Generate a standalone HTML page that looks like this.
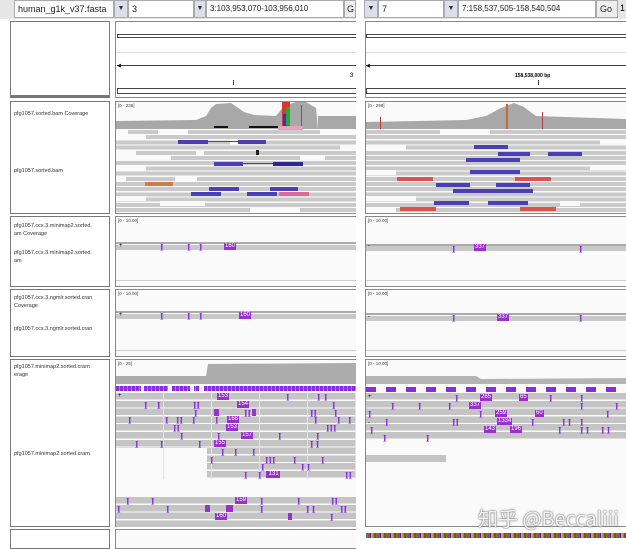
<!DOCTYPE html><html><head><meta charset="utf-8"><style>
*{margin:0;padding:0;box-sizing:border-box}
body{width:626px;height:547px;overflow:hidden;background:#fff;font-family:"Liberation Sans",sans-serif;position:relative}
.a{position:absolute}
.tb{position:absolute;top:0;height:18px;background:#fff;border:1px solid #aaa;font-size:9px;line-height:16px;padding-left:3px;color:#222}
.ar{position:absolute;top:0;height:18px;background:#dde;border:1px solid #aaa;font-size:7px;line-height:16px;text-align:center;color:#333}
.nm{position:absolute;left:10px;width:100px;background:#fff;border:1px solid #777;font-size:5.5px;color:#333}
.dp{position:absolute;background:#fafafa;border:1px solid #888}
.sc{position:absolute;font-size:4.5px;color:#444}
.I{position:absolute;color:#8a2be2;font:bold 9px "Liberation Serif",serif;line-height:8px;transform:scaleY(1.1)}
.bx{position:absolute;background:#9b30d0;color:#fff;font-size:6px;line-height:7px;height:7px;padding:0 1px}
.b{position:absolute;height:4px;background:#4a3fb5}
.rd{position:absolute;height:4px;background:#d9534f}
.g{position:absolute;background:#fafafa}
</style></head><body>
<div class="a" style="left:0;top:0;width:626px;height:19px;background:#e6e6e6"></div>
<div class="tb" style="left:14px;width:100px">human_g1k_v37.fasta</div>
<div class="ar" style="left:114px;width:14px">▼</div>
<div class="tb" style="left:128px;width:66px">3</div>
<div class="ar" style="left:194px;width:12px">▼</div>
<div class="tb" style="left:206px;width:138px;font-size:8px">3:103,953,070-103,956,010</div>
<div class="tb" style="left:344px;width:12px;padding-left:2px;background:#eee">G</div>
<div class="ar" style="left:364px;width:14px">▼</div>
<div class="tb" style="left:378px;width:66px">7</div>
<div class="ar" style="left:444px;width:14px">▼</div>
<div class="tb" style="left:458px;width:138px;font-size:8px">7:158,537,505-158,540,504</div>
<div class="tb" style="left:596px;width:22px;background:#eee">Go</div>
<div class="a" style="left:620px;top:3px;font-size:9px">1</div>
<div class="a" style="left:356px;top:0;width:8px;height:547px;background:#fff"></div>

<!-- ruler -->
<div class="nm" style="top:21px;height:77px"></div>
<div class="a" style="left:10px;top:95px;width:100px;height:2px;background:#777"></div>
<div class="dp" style="left:115px;top:21px;width:241px;height:77px;background:#fff;border-right:none"></div>
<div class="dp" style="left:365px;top:21px;width:261px;height:77px;background:#fff;border-right:none"></div>
<div class="a" style="left:117px;top:34px;width:239px;height:4px;border:1px solid #444;border-right:none"></div>
<div class="a" style="left:366px;top:34px;width:260px;height:4px;border:1px solid #444;border-right:none"></div>
<div class="a" style="left:117px;top:52px;width:239px;height:1px;background:#ddd"></div>
<div class="a" style="left:366px;top:52px;width:260px;height:1px;background:#ddd"></div>
<div class="a" style="left:117px;top:65px;width:239px;height:1px;background:#444"></div>
<div class="a" style="left:366px;top:65px;width:260px;height:1px;background:#444"></div>
<div class="a" style="left:117px;top:63px;font-size:5px">◀</div>
<div class="a" style="left:366px;top:63px;font-size:5px">◀</div>
<div class="a" style="left:233px;top:80px;width:1px;height:5px;background:#444"></div>
<div class="a" style="left:538px;top:80px;width:1px;height:5px;background:#444"></div>
<div class="a" style="left:350px;top:73px;font-size:6px">3</div>
<div class="a" style="left:515px;top:73px;font-size:5px;font-weight:bold">158,538,000 bp</div>
<div class="a" style="left:117px;top:88px;width:239px;height:6px;border:1px solid #444;border-right:none"></div>
<div class="a" style="left:366px;top:88px;width:260px;height:6px;border:1px solid #444;border-right:none"></div>

<!-- section 1 -->
<div class="nm" style="top:101px;height:113px"><div class="a" style="left:3px;top:9px">pfg1057.sorted.bam Coverage</div><div class="a" style="left:3px;top:66px">pfg1057.sorted.bam</div></div>
<div class="dp" style="left:115px;top:101px;width:241px;height:113px;border-right:none"></div>
<div class="dp" style="left:365px;top:101px;width:261px;height:113px;border-right:none"></div>
<svg class="a" style="left:116px;top:102px" width="240" height="27"><polygon points="0,27 0,19 80,18 90,14 95,6 100,2 115,1 128,10 138,13 160,14 168,4 180,0 190,0 200,6 202,27" fill="#a8a8a8"/><polygon points="202,27 202,14 240,14 240,27" fill="#a8a8a8"/><rect x="166" y="0" width="8" height="27" fill="#d33"/><rect x="170" y="5" width="4" height="18" fill="#2a3"/><rect x="167" y="12" width="3" height="12" fill="#33c"/><rect x="185" y="3" width="1" height="24" fill="#a44"/><rect x="98" y="24" width="14" height="2" fill="#111"/><rect x="133" y="24" width="35" height="2" fill="#111"/></svg>
<svg class="a" style="left:366px;top:102px" width="260" height="27"><polygon points="0,27 0,20 100,18 120,14 135,6 148,1 158,5 170,14 260,17 260,27" fill="#a8a8a8"/><rect x="140" y="2" width="2" height="25" fill="#c63"/><rect x="176" y="10" width="1" height="17" fill="#a44"/><rect x="14" y="15" width="1" height="12" fill="#c33"/></svg>
<div class="sc" style="left:118px;top:103px">[0 - 236]</div><div class="sc" style="left:368px;top:103px">[0 - 298]</div>
<div class="a" style="left:116px;top:130px;width:240px;height:83px;background:repeating-linear-gradient(180deg,#cacaca 0 4px,transparent 4px 5.2px)"></div>
<div class="a" style="left:366px;top:130px;width:260px;height:83px;background:repeating-linear-gradient(180deg,#cacaca 0 4px,transparent 4px 5.2px)"></div>
<div class="g" style="left:116px;top:130px;width:12px;height:5px"></div><div class="g" style="left:158px;top:130px;width:30px;height:5px"></div><div class="g" style="left:116px;top:135px;width:30px;height:5px"></div><div class="g" style="left:230px;top:140px;width:10px;height:5px"></div><div class="g" style="left:116px;top:150px;width:20px;height:5px"></div><div class="g" style="left:196px;top:150px;width:8px;height:5px"></div><div class="g" style="left:116px;top:156px;width:55px;height:5px"></div><div class="g" style="left:300px;top:156px;width:25px;height:5px"></div><div class="g" style="left:116px;top:166px;width:30px;height:5px"></div><div class="g" style="left:116px;top:176px;width:10px;height:5px"></div><div class="g" style="left:175px;top:176px;width:22px;height:5px"></div><div class="g" style="left:116px;top:196px;width:30px;height:5px"></div><div class="g" style="left:160px;top:201px;width:45px;height:5px"></div><div class="g" style="left:250px;top:207px;width:50px;height:5px"></div><div class="g" style="left:320px;top:130px;width:36px;height:5px"></div><div class="g" style="left:340px;top:145px;width:16px;height:5px"></div>
<div class="g" style="left:440px;top:130px;width:50px;height:5px"></div><div class="g" style="left:366px;top:145px;width:40px;height:5px"></div><div class="g" style="left:600px;top:140px;width:26px;height:5px"></div><div class="g" style="left:366px;top:170px;width:30px;height:5px"></div><div class="g" style="left:590px;top:165px;width:36px;height:5px"></div><div class="g" style="left:366px;top:196px;width:50px;height:5px"></div><div class="g" style="left:560px;top:201px;width:20px;height:5px"></div><div class="g" style="left:366px;top:207px;width:30px;height:5px"></div>
<div class="b" style="left:178px;top:140px;width:30px"></div><div class="a" style="left:208px;top:141px;width:30px;height:1px;background:#4a3fb5"></div><div class="b" style="left:238px;top:140px;width:28px"></div>
<div class="b" style="left:214px;top:162px;width:29px"></div><div class="a" style="left:243px;top:163px;width:30px;height:1px;background:#4a3fb5"></div><div class="b" style="left:273px;top:162px;width:30px;background:#2e2690"></div>
<div class="b" style="left:209px;top:187px;width:30px"></div><div class="b" style="left:270px;top:187px;width:28px"></div>
<div class="b" style="left:191px;top:192px;width:30px"></div><div class="b" style="left:247px;top:192px;width:30px"></div>
<div class="a" style="left:279px;top:192px;width:30px;height:4px;background:#d86a9a"></div>
<div class="a" style="left:145px;top:182px;width:28px;height:4px;background:#d07a4a"></div>
<div class="a" style="left:278px;top:126px;width:25px;height:4px;background:#e8a0c0"></div>
<div class="a" style="left:256px;top:150px;width:3px;height:5px;background:#222"></div>
<div class="b" style="left:474px;top:145px;width:34px"></div><div class="b" style="left:498px;top:152px;width:32px"></div><div class="b" style="left:548px;top:152px;width:34px"></div>
<div class="b" style="left:466px;top:158px;width:54px"></div><div class="b" style="left:470px;top:170px;width:50px"></div>
<div class="rd" style="left:397px;top:177px;width:36px"></div><div class="rd" style="left:515px;top:177px;width:36px"></div>
<div class="b" style="left:436px;top:183px;width:34px"></div><div class="b" style="left:496px;top:183px;width:34px"></div>
<div class="b" style="left:453px;top:189px;width:80px"></div><div class="b" style="left:434px;top:201px;width:35px"></div><div class="b" style="left:488px;top:201px;width:40px"></div>
<div class="rd" style="left:400px;top:207px;width:36px"></div><div class="rd" style="left:520px;top:207px;width:36px"></div>

<!-- section 2 -->
<div class="nm" style="top:216px;height:71px"><div class="a" style="left:3px;top:5px;line-height:8px">pfg1057.ccs.3.minimap2.sorted.<br>am Coverage</div><div class="a" style="left:3px;top:32px;line-height:8px">pfg1057.ccs.3.minimap2.sorted.<br>am</div></div>
<div class="dp" style="left:115px;top:216px;width:241px;height:71px;border-right:none"></div>
<div class="dp" style="left:365px;top:216px;width:261px;height:71px;border-right:none"></div>
<div class="sc" style="left:118px;top:218px">[0 - 10.00]</div><div class="sc" style="left:368px;top:218px">[0 - 10.00]</div>
<div class="a" style="left:116px;top:242px;width:240px;height:2px;background:#aaa"></div><div class="a" style="left:366px;top:244px;width:260px;height:2px;background:#aaa"></div>
<div class="a" style="left:116px;top:245px;width:240px;height:5px;background:#c8c8c8"></div><div class="a" style="left:366px;top:246px;width:260px;height:5px;background:#c8c8c8"></div>
<div class="a" style="left:119px;top:243px;font-size:6px">+</div><div class="a" style="left:368px;top:243px;font-size:6px">-</div>
<div class="I" style="left:160px;top:243px">I</div><div class="I" style="left:187px;top:243px">I</div><div class="I" style="left:199px;top:243px">I</div><div class="bx" style="left:224px;top:243px">160</div>
<div class="I" style="left:452px;top:245px">I</div><div class="bx" style="left:474px;top:244px">337</div><div class="I" style="left:579px;top:245px">I</div>
<div class="a" style="left:116px;top:280px;width:240px;height:1px;background:#ccc"></div><div class="a" style="left:366px;top:280px;width:260px;height:1px;background:#ccc"></div>

<!-- section 3 -->
<div class="nm" style="top:289px;height:68px"><div class="a" style="left:3px;top:4px;line-height:8px">pfg1057.ccs.3.ngmlr.sorted.cran<br>Coverage</div><div class="a" style="left:3px;top:36px">pfg1057.ccs.3.ngmlr.sorted.cran</div></div>
<div class="dp" style="left:115px;top:289px;width:241px;height:68px;border-right:none"></div>
<div class="dp" style="left:365px;top:289px;width:261px;height:68px;border-right:none"></div>
<div class="sc" style="left:118px;top:291px">[0 - 10.00]</div><div class="sc" style="left:368px;top:291px">[0 - 10.00]</div>
<div class="a" style="left:116px;top:311px;width:240px;height:2px;background:#aaa"></div><div class="a" style="left:366px;top:313px;width:260px;height:2px;background:#aaa"></div>
<div class="a" style="left:116px;top:314px;width:240px;height:5px;background:#c8c8c8"></div><div class="a" style="left:366px;top:316px;width:260px;height:5px;background:#c8c8c8"></div>
<div class="a" style="left:119px;top:312px;font-size:6px">+</div><div class="a" style="left:368px;top:314px;font-size:6px">-</div>
<div class="I" style="left:160px;top:312px">I</div><div class="I" style="left:187px;top:312px">I</div><div class="I" style="left:199px;top:312px">I</div><div class="bx" style="left:239px;top:312px">160</div>
<div class="I" style="left:452px;top:314px">I</div><div class="bx" style="left:497px;top:314px">337</div><div class="I" style="left:579px;top:314px">I</div>
<div class="a" style="left:116px;top:350px;width:240px;height:1px;background:#ccc"></div><div class="a" style="left:366px;top:350px;width:260px;height:1px;background:#ccc"></div>

<!-- section 4 -->
<div class="nm" style="top:359px;height:168px"><div class="a" style="left:3px;top:3px;line-height:8px">pfg1057.minimap2.sorted.cram<br>erage</div><div class="a" style="left:3px;top:91px">pfg1057.minimap2.sorted.cram</div></div>
<div class="dp" style="left:115px;top:359px;width:241px;height:168px;border-right:none"></div>
<div class="dp" style="left:365px;top:359px;width:261px;height:168px;border-right:none"></div>
<div class="sc" style="left:118px;top:361px">[0 - 25]</div><div class="sc" style="left:368px;top:361px">[0 - 10.00]</div>
<svg class="a" style="left:116px;top:362px" width="240" height="22"><polygon points="0,22 0,14 90,14 92,2 240,1 240,22" fill="#acacac"/></svg>
<svg class="a" style="left:366px;top:372px" width="260" height="12"><polygon points="0,12 0,4 110,4 115,7 260,6 260,12" fill="#b4b4b4"/></svg>
<div class="a" style="left:116px;top:386px;width:240px;height:5px;background:repeating-linear-gradient(90deg,#8a2be2 0 3px,#b37ae8 3px 4px)"></div>
<div class="g" style="left:141px;top:386px;width:3px;height:5px"></div><div class="g" style="left:168px;top:386px;width:4px;height:5px"></div><div class="g" style="left:190px;top:386px;width:4px;height:5px"></div><div class="g" style="left:199px;top:386px;width:5px;height:5px"></div>
<div class="a" style="left:366px;top:387px;width:260px;height:5px;background:repeating-linear-gradient(90deg,#8a2be2 0 10px,transparent 10px 20px)"></div>
<div class="a" style="left:116px;top:393px;width:240px;height:86px;background:repeating-linear-gradient(180deg,#c4c4c4 0 6.5px,transparent 6.5px 7.8px)"></div>
<div class="g" style="left:116px;top:448px;width:91px;height:32px"></div>
<div class="a" style="left:116px;top:393px;width:240px;height:86px;background:repeating-linear-gradient(90deg,transparent 0 47px,#e2e2e2 47px 48px)"></div>
<div class="a" style="left:366px;top:393px;width:260px;height:46px;background:repeating-linear-gradient(180deg,#c4c4c4 0 6.5px,transparent 6.5px 7.8px)"></div>
<div class="a" style="left:366px;top:455px;width:80px;height:6.5px;background:#c4c4c4"></div>
<div class="a" style="left:116px;top:497px;width:240px;height:30px;background:repeating-linear-gradient(180deg,#c4c4c4 0 6.5px,transparent 6.5px 7.8px)"></div>
<div class="a" style="left:118px;top:393px;font-size:6px">+</div><div class="a" style="left:368px;top:394px;font-size:6px">+</div><div class="a" style="left:368px;top:420px;font-size:6px">-</div>
<div class="bx" style="left:217px;top:393px">153</div><div class="I" style="left:286px;top:393px">I</div><div class="I" style="left:317px;top:393px">I</div><div class="I" style="left:324px;top:393px">I</div>
<div class="I" style="left:144px;top:401px">I</div><div class="I" style="left:157px;top:401px">I</div><div class="I" style="left:193px;top:401px">II</div><div class="bx" style="left:237px;top:401px">154</div><div class="I" style="left:332px;top:401px">I</div>
<div class="I" style="left:194px;top:409px">I</div><div class="bx" style="left:214px;top:409px">&nbsp;&nbsp;</div><div class="I" style="left:244px;top:409px">II</div><div class="bx" style="left:252px;top:409px">&nbsp;</div><div class="I" style="left:310px;top:409px">II</div><div class="I" style="left:334px;top:409px">I</div>
<div class="I" style="left:128px;top:416px">I</div><div class="I" style="left:165px;top:416px">I</div><div class="I" style="left:176px;top:416px">II</div><div class="I" style="left:192px;top:416px">I</div><div class="I" style="left:215px;top:416px">I</div><div class="bx" style="left:227px;top:416px">168</div><div class="I" style="left:314px;top:416px">I</div><div class="I" style="left:337px;top:416px">I</div><div class="I" style="left:348px;top:416px">I</div>
<div class="I" style="left:173px;top:424px">II</div><div class="bx" style="left:226px;top:424px">153</div><div class="I" style="left:326px;top:424px">III</div>
<div class="I" style="left:180px;top:432px">I</div><div class="I" style="left:217px;top:432px">I</div><div class="bx" style="left:241px;top:432px">157</div><div class="I" style="left:278px;top:432px">I</div><div class="I" style="left:316px;top:432px">I</div>
<div class="I" style="left:135px;top:440px">I</div><div class="I" style="left:160px;top:440px">I</div><div class="I" style="left:198px;top:440px">I</div><div class="bx" style="left:214px;top:440px">155</div><div class="I" style="left:310px;top:440px">I I</div>
<div class="I" style="left:221px;top:448px">I</div><div class="I" style="left:234px;top:448px">I</div><div class="I" style="left:252px;top:448px">I</div>
<div class="I" style="left:210px;top:456px">I</div><div class="I" style="left:265px;top:456px">III</div><div class="I" style="left:293px;top:456px">I</div><div class="I" style="left:321px;top:456px">I</div>
<div class="I" style="left:261px;top:463px">I</div><div class="I" style="left:301px;top:463px">I I</div>
<div class="I" style="left:244px;top:471px">I</div><div class="I" style="left:258px;top:471px">I</div><div class="bx" style="left:266px;top:471px">&nbsp;131</div><div class="I" style="left:345px;top:471px">II</div>
<div class="I" style="left:126px;top:497px">I</div><div class="I" style="left:151px;top:497px">I</div><div class="bx" style="left:235px;top:497px">159</div><div class="I" style="left:260px;top:497px">I</div><div class="I" style="left:297px;top:497px">I</div><div class="I" style="left:331px;top:497px">II</div>
<div class="I" style="left:117px;top:505px">I</div><div class="I" style="left:166px;top:505px">I</div><div class="bx" style="left:205px;top:505px">&nbsp;&nbsp;</div><div class="bx" style="left:226px;top:505px">&nbsp;&nbsp;&nbsp;</div><div class="I" style="left:260px;top:505px">I</div><div class="I" style="left:306px;top:505px">I I</div><div class="I" style="left:340px;top:505px">II</div>
<div class="bx" style="left:215px;top:513px">160</div><div class="bx" style="left:288px;top:513px">&nbsp;</div><div class="I" style="left:330px;top:513px">I</div>
<div class="I" style="left:455px;top:394px">I</div><div class="bx" style="left:480px;top:394px">265</div><div class="bx" style="left:519px;top:394px">65</div><div class="I" style="left:549px;top:394px">I</div><div class="I" style="left:580px;top:394px">I</div>
<div class="I" style="left:391px;top:402px">I</div><div class="I" style="left:418px;top:402px">I</div><div class="I" style="left:448px;top:402px">I</div><div class="bx" style="left:469px;top:402px">337</div><div class="I" style="left:580px;top:402px">I</div><div class="I" style="left:615px;top:402px">I</div>
<div class="I" style="left:368px;top:410px">I</div><div class="I" style="left:479px;top:410px">I</div><div class="bx" style="left:495px;top:410px">259</div><div class="bx" style="left:535px;top:410px">60</div><div class="I" style="left:606px;top:410px">I</div>
<div class="I" style="left:385px;top:418px">I</div><div class="I" style="left:452px;top:418px">II</div><div class="bx" style="left:497px;top:418px">1334</div><div class="I" style="left:531px;top:418px">I</div><div class="I" style="left:562px;top:418px">I I</div><div class="I" style="left:580px;top:418px">I</div>
<div class="I" style="left:370px;top:426px">I</div><div class="bx" style="left:484px;top:426px">143</div><div class="bx" style="left:510px;top:426px">196</div><div class="I" style="left:558px;top:426px">I</div><div class="I" style="left:580px;top:426px">I I</div><div class="I" style="left:601px;top:426px">I I</div>
<div class="I" style="left:383px;top:434px">I</div><div class="I" style="left:426px;top:434px">I</div>
<div class="a" style="left:478px;top:503px;font:20px 'Noto Sans CJK SC','Liberation Sans',sans-serif;color:rgba(255,255,255,0.9);text-shadow:0 0 2px #777,0 0 1px #555">知乎 @Beccaliii</div>

<!-- section 5 -->
<div class="nm" style="top:529px;height:20px"></div>
<div class="dp" style="left:115px;top:529px;width:241px;height:20px;border-right:none"></div>
<div class="a" style="left:366px;top:533px;width:260px;height:5px;background:repeating-linear-gradient(90deg,#2a9d2a 0 2px,#c33 2px 4px,#33c 4px 5px,#d9a020 5px 7px,#6a3 7px 8px,#a33 8px 10px)"></div>
</body></html>
